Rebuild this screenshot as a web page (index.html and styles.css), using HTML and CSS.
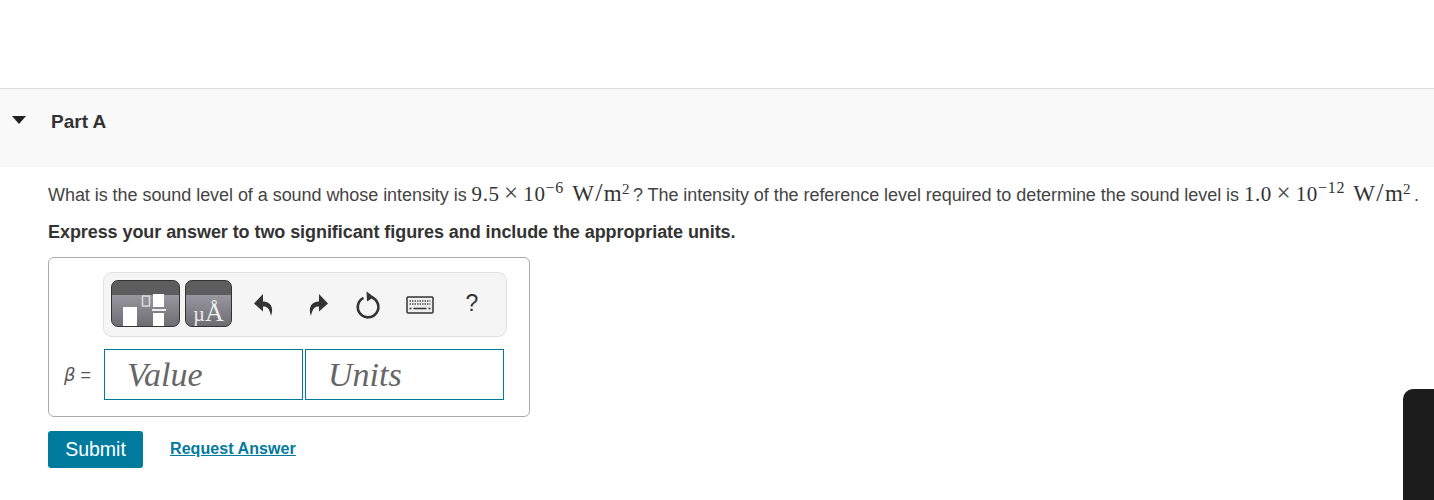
FILE: index.html
```html
<!DOCTYPE html>
<html lang="en">
<head>
<meta charset="utf-8">
<title>Part A</title>
<link rel="stylesheet" href="styles.css">
</head>
<body>
<section class="part">
  <header class="part-head">
    <span class="caret"></span>
    <h2 class="part-title">Part A</h2>
  </header>
  <div class="part-body">
    <p class="question">What is the sound level of a sound whose intensity is <span class="math">9.5<span class="op">×</span>10<sup class="exp">−6</sup><span class="unit">W<span class="slash">/</span>m<sup>2</sup></span></span>? The intensity of the reference level required to determine the sound level is <span class="math">1.0<span class="op">×</span>10<sup class="exp">−12</sup><span class="unit">W<span class="slash">/</span>m<sup>2</sup></span></span>.</p>
    <p class="instruction">Express your answer to two significant figures and include the appropriate units.</p>
    <div class="answer-box">
      <div class="toolbar">
        <div class="tpl tpl-wide">
          <svg class="tpl-art" width="68" height="32" viewBox="0 0 68 32">
            <rect x="11" y="13" width="14" height="19" fill="#fff"/>
            <rect x="30.500" y="2" width="7" height="10" fill="none" stroke="#ddd" stroke-width="1.500"/>
            <rect x="41" y="0" width="11" height="13" fill="#fff"/>
            <rect x="40" y="15" width="14" height="2" fill="#eee"/>
            <rect x="41" y="19" width="11" height="13" fill="#fff"/>
          </svg>
        </div>
        <div class="tpl tpl-narrow"><span class="tpl-unit"><span class="tpl-mu">µ</span>Å</span></div>
        <button class="tool tool-undo" aria-label="Undo"><svg width="22" height="24" viewBox="0 0 22 24"><path d="M10 1 1 10.500l9 8v-5c4 0 6.500 1.500 8 9.500 3-8 0-14.500-8-14.500z" fill="#333"/></svg></button>
        <button class="tool tool-redo" aria-label="Redo"><svg width="22" height="24" viewBox="0 0 22 24"><path d="M12 1 21 10.500l-9 8v-5c-4 0-6.500 1.500-8 9.500-3-8 0-14.500 8-14.500z" fill="#333"/></svg></button>
        <button class="tool tool-reset" aria-label="Reset"><svg width="26" height="28" viewBox="0 0 26 28"><path d="M8.500 6.800a10.300 10.300 0 1 0 8.500-.3" fill="none" stroke="#333" stroke-width="2.600"/><path d="M11.500 0.500 19 6 12 10.500z" fill="#333"/></svg></button>
        <button class="tool tool-keys" aria-label="Keyboard"><svg width="28" height="18" viewBox="0 0 28 18"><rect x="1" y="1" width="26" height="16" rx="1" fill="#eee" stroke="#333" stroke-width="1.500"/><path d="M3.500 5h21M3.500 8h21" stroke="#555" stroke-width="1.500" stroke-dasharray="1.500 1"/><path d="M3.500 12.500h2M7.500 12.500h13M22.500 12.500h2" stroke="#333" stroke-width="1.500"/></svg></button>
        <button class="tool tool-help" aria-label="Help">?</button>
      </div>
      <div class="entry-row">
        <span class="symbol"><i>β</i> =</span>
        <div class="field">Value</div>
        <div class="field field-units">Units</div>
      </div>
    </div>
    <div class="actions">
      <button class="submit">Submit</button>
      <a class="request" href="#">Request Answer</a>
    </div>
  </div>
</section>
<div class="side-tab"></div>
</body>
</html>
```
FILE: styles.css
```css
* { box-sizing: border-box; }
html, body { margin: 0; padding: 0; }
body {
  height: 500px;
  overflow: hidden;
  background: #fff;
  color: #333;
  font-family: "Liberation Sans", Arial, sans-serif;
  padding-top: 88px;
}
.part-head {
  height: 79px;
  background: #f9f9f9;
  border-top: 1px solid #e0e0e0;
  display: flex;
  align-items: flex-start;
  padding-top: 22px;
}
.caret {
  width: 0;
  height: 0;
  margin: 5px 0 0 12px;
  border-left: 7.500px solid transparent;
  border-right: 7.500px solid transparent;
  border-top: 8px solid #222;
}
.part-title {
  margin: 0 0 0 25px;
  font-size: 19px;
  line-height: 22px;
  font-weight: 700;
  color: #333;
}
.part-body { padding: 14px 0 0 48px; }
.question {
  margin: 0;
  font-size: 18px;
  line-height: 24px;
  letter-spacing: -0.05px;
  white-space: nowrap;
  color: #444;
}
.math {
  font-family: "Liberation Serif", "Times New Roman", serif;
  font-size: 21px;
  letter-spacing: 0.6px;
  color: #333;
}
.math sup { font-size: 15px; line-height: 0; vertical-align: 7px; letter-spacing: 0.5px; margin-right: 3px; }
.math .exp { font-size: 16px; letter-spacing: 0.8px; vertical-align: 8px; margin-right: 8px; }
.op { margin: 0 4.500px; font-size: 25px; line-height: 0; color: #444; }
.unit { font-size: 23px; letter-spacing: 0.3px; }
.slash { font-size: 26px; margin: 0 1px; }
.instruction {
  margin: 14px 0 0;
  font-size: 18px;
  line-height: 22px;
  letter-spacing: -0.07px;
  font-weight: 700;
  color: #333;
}
.answer-box {
  width: 482px;
  height: 160px;
  margin-top: 14px;
  border: 1px solid #aaa;
  border-radius: 6px;
  padding: 14px 22px 0 54px;
}
.toolbar {
  width: 404px;
  height: 65px;
  background: #f5f5f5;
  border: 1px solid #e0e0e0;
  border-radius: 9px;
  display: flex;
  align-items: center;
  padding: 0 0 0 7px;
}
.tpl {
  position: relative;
  height: 47px;
  margin-top: -2px;
  border: 1px solid #333;
  border-radius: 7px;
  background: linear-gradient(#5d5d5d 0 14px, #98979f 14px, #6e6d72 100%);
  overflow: hidden;
}
.tpl-wide { width: 69px; }
.tpl-narrow { width: 47px; margin-left: 5px; text-align: center; }
.tpl-art { position: absolute; left: 0; top: 13px; }
.tpl-unit {
  position: absolute;
  left: 0;
  right: 0;
  bottom: 0;
  color: #eee;
  font-family: "Liberation Serif", serif;
  font-size: 26px;
  line-height: 24px;
}
.tpl-mu { font-size: 20px; }
.tool {
  padding: 0;
  border: 0;
  background: none;
  display: flex;
  align-items: center;
  justify-content: center;
  color: #333;
}
.tool-undo { width: 22px; margin-left: 21px; }
.tool-redo { width: 22px; margin-left: 32px; }
.tool-reset { width: 26px; margin-left: 26px; }
.tool-keys { width: 28px; margin-left: 25px; }
.tool-help {
  width: 14px;
  margin-left: 31px;
  margin-top: -2px;
  font-family: "Liberation Sans", sans-serif;
  font-size: 23px;
}
.entry-row {
  display: flex;
  align-items: center;
  margin: 12px 0 0 -39px;
}
.symbol {
  width: 40px;
  font-size: 18px;
  color: #555;
}
.symbol i { font-family: "DejaVu Sans", sans-serif; }
.field {
  width: 199px;
  height: 51px;
  border: 1px solid #007b9e;
  padding-left: 22px;
  font-family: "Liberation Serif", serif;
  font-style: italic;
  font-size: 34px;
  line-height: 50px;
  color: #666;
}
.field-units { margin-left: 2px; }
.actions {
  display: flex;
  align-items: center;
  margin-top: 14px;
}
.submit {
  width: 95px;
  height: 37px;
  background: #007b9e;
  border: 0;
  border-radius: 3px;
  color: #fff;
  font-family: "Liberation Sans", sans-serif;
  font-size: 19.500px;
}
.request {
  margin: 0 0 2px 27px;
  color: #007b9e;
  font-size: 16px;
  letter-spacing: 0.08px;
  font-weight: 700;
  text-decoration: underline;
}
.side-tab {
  position: absolute;
  right: 0;
  top: 389px;
  width: 31px;
  height: 111px;
  background: #1c1c1c;
  border-top-left-radius: 10px;
}
```
